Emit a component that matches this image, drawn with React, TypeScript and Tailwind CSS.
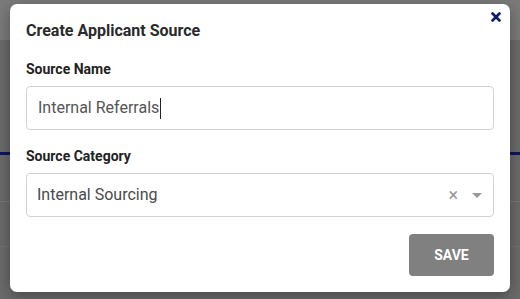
import { X } from 'lucide-react';

export default function App() {
  return (
    <div className="relative h-[299px] w-[520px] overflow-hidden bg-[#6b6b6b] font-['Roboto',sans-serif]">
      {/* page behind the overlay */}
      <div className="h-[40px] bg-[#7b7b7b]" />
      <div className="h-[112px]" />
      <div className="h-[3px] bg-[#10145a]" />
      <div className="h-[47px] border-b border-[#787878]" />
      <div className="h-[45px] border-b border-[#747474]" />

      {/* modal */}
      <div className="absolute left-[10px] top-[4px] w-[500px] h-[288px] rounded-[7px] bg-white shadow-[0_4px_16px_rgba(0,0,0,0.35)] px-[16px]">
        <button className="absolute right-[7px] top-[6px] text-[#0f1a6e]">
          <X size={14} strokeWidth={4.5} />
        </button>

        <h2 className="pt-[17px] text-[16px] font-bold leading-[20px] text-[#2a2a2a]">
          Create Applicant Source
        </h2>

        <label className="mt-[20px] block text-[14px] font-bold leading-[16px] text-[#222]">
          Source Name
        </label>
        <div className="mt-[9px] flex h-[44px] items-center rounded-[4px] border border-[#cfd4da] px-[11px] text-[16px] text-[#555]">
          Internal Referrals
          <span className="ml-[1px] inline-block h-[21px] w-[1px] bg-[#222]" />
        </div>

        <label className="mt-[18px] block text-[14px] font-bold leading-[16px] text-[#222]">
          Source Category
        </label>
        <div className="mt-[9px] flex h-[44px] items-center rounded-[4px] border border-[#cfd4da] pl-[10px] pr-[10px] text-[16px] text-[#4a4a4a]">
          <span className="flex-1">Internal Sourcing</span>
          <span className="text-[#999] text-[18px] leading-none">×</span>
          <span className="ml-[14px] mr-[1px] h-0 w-0 border-x-[5px] border-t-[5px] border-x-transparent border-t-[#999]" />
        </div>

        <div className="mt-[17px] flex justify-end">
          <button className="h-[42px] w-[85px] rounded-[4px] bg-[#808080] text-[14px] font-bold text-white">
            SAVE
          </button>
        </div>
      </div>
    </div>
  );
}
